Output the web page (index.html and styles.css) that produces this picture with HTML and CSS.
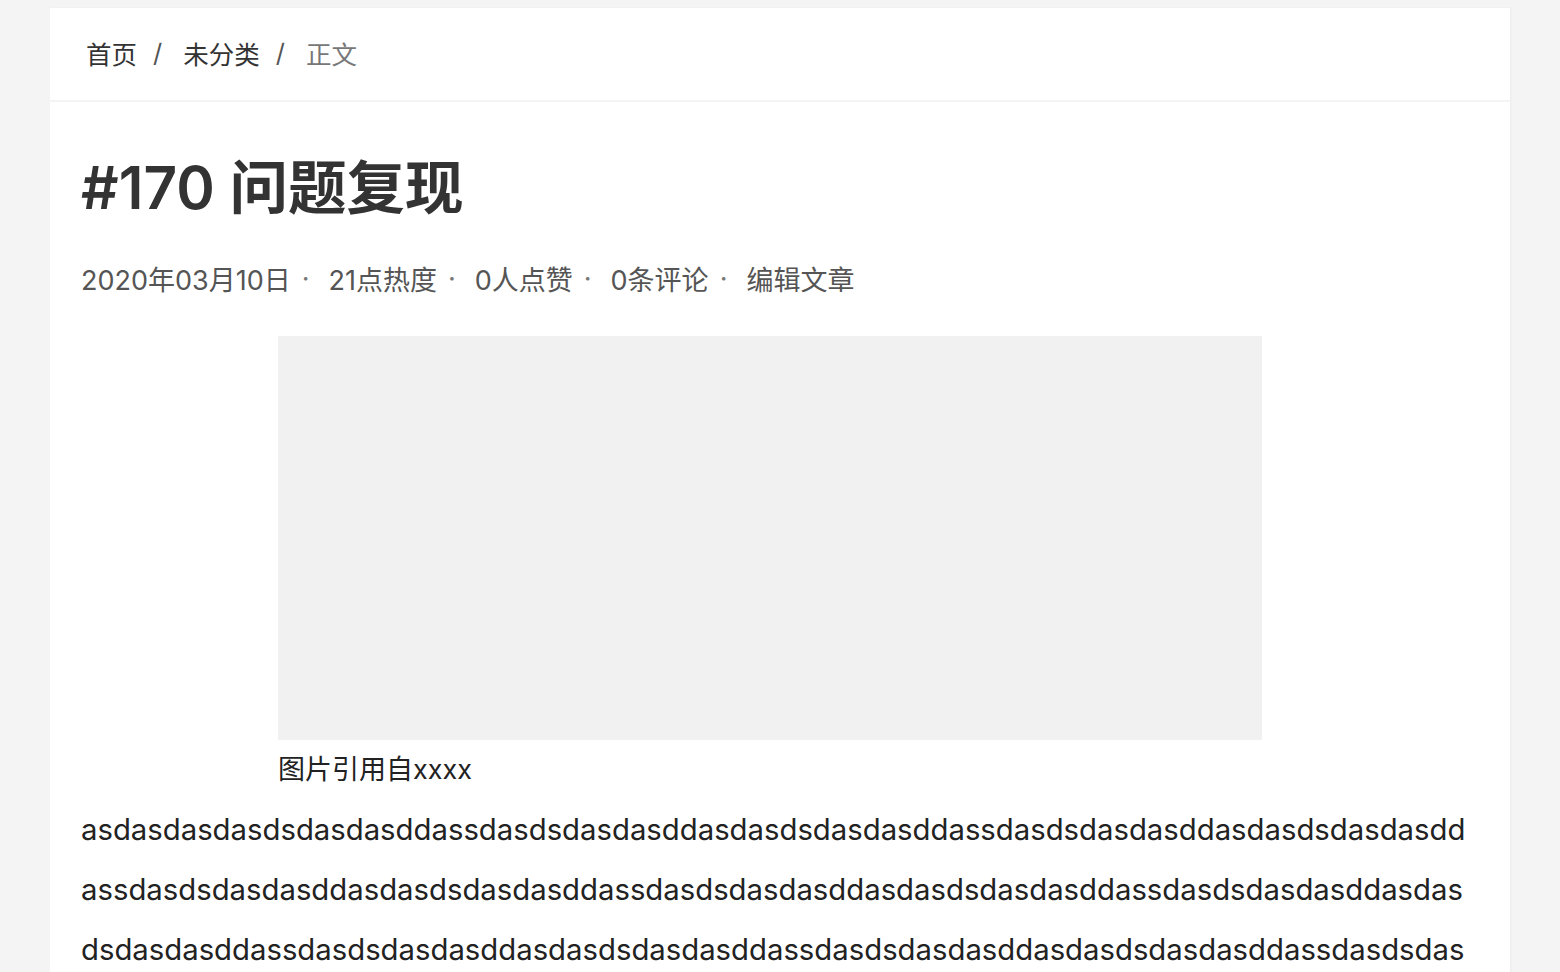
FILE: index.html
```html
<!DOCTYPE html>
<html lang="zh-CN">
<head>
<meta charset="utf-8">
<title>#170 问题复现</title>
<link rel="stylesheet" href="styles.css">
</head>
<body>
<div class="card">
  <nav class="crumbs">
    <a class="crumb" href="#">首页</a>
    <span class="sep">/</span>
    <a class="crumb" href="#">未分类</a>
    <span class="sep">/</span>
    <span class="crumb current">正文</span>
  </nav>
  <article class="post">
    <h1 class="title">#170 问题复现</h1>
    <div class="meta">
      <span class="meta-item">2020年03月10日</span><span class="dot">·</span>
      <span class="meta-item">21点热度</span><span class="dot">·</span>
      <span class="meta-item">0人点赞</span><span class="dot">·</span>
      <span class="meta-item">0条评论</span><span class="dot">·</span>
      <a class="meta-item" href="#">编辑文章</a>
    </div>
    <figure class="figure">
      <div class="image"></div>
      <figcaption class="caption">图片引用自xxxx</figcaption>
    </figure>
    <p class="body-text">asdasdasdasdsdasdasddassdasdsdasdasddasdasdsdasdasddassdasdsdasdasddasdasdsdasdasddassdasdsdasdasddasdasdsdasdasddassdasdsdasdasddasdasdsdasdasddassdasdsdasdasddasdasdsdasdasddassdasdsdasdasddasdasdsdasdasddassdasdsdasdasddasdasdsdasdasddassdasdsdas</p>
  </article>
</div>
</body>
</html>
```

FILE: styles.css
```css
html, body {
  margin: 0;
  padding: 0;
  background: #f4f4f4;
}
body {
  padding: 8px 50px 0;
  font-family: Inter, "Noto Sans CJK SC", sans-serif;
  color: #333;
}
a {
  color: inherit;
  text-decoration: none;
}
.card {
  background: #fff;
  box-shadow: 1px 0 2px rgba(0,0,0,0.04);
  min-height: 980px;
}
.crumbs {
  height: 89px;
  padding: 0 36px 3px;
  display: flex;
  align-items: center;
  font-size: 25.5px;
  border-bottom: 2px solid #f4f4f4;
  color: #333;
}
.sep {
  margin: 0 21px 0 16px;
  color: #555;
}
.current {
  color: #777;
}
.post {
  padding: 46px 36px 0 31px;
}
.title {
  margin: 0;
  font-size: 58.5px;
  line-height: 80px;
  font-weight: 600;
  color: #333;
}
.meta {
  margin-top: 30px;
  height: 40px;
  display: flex;
  align-items: center;
  font-size: 27px;
  color: #555;
}
.dot {
  margin: 0 19px 0 11px;
  color: #777;
}
.figure {
  margin: 38px 0 0 197px;
  width: 984px;
}
.image {
  height: 404px;
  background: #f1f1f1;
}
.caption {
  margin-top: 10px;
  line-height: 40px;
  font-size: 27px;
  color: #222;
}
.body-text {
  margin: 10px 0 0;
  font-size: 29.3px;
  line-height: 60px;
  color: #222;
  word-break: break-all;
}
```
